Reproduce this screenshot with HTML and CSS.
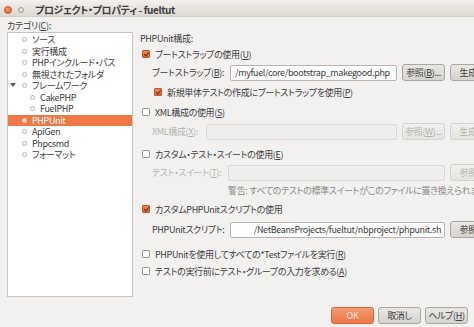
FILE: index.html
```html
<!DOCTYPE html>
<html>
<head>
    <title>プロジェクト・プロパティ - fueltut</title>
    <link rel="stylesheet" href="styles.css">
</head>
<body>
    <div class="titlebar">
        <span class="win-btn close"></span>
        <span class="win-btn minimize"></span>
        <span class="title">プロジェクト・プロパティ - fueltut</span>
    </div>

    <div class="dialog">
        <div class="categories">
            <div class="cat-label">カテゴリ(<u>C</u>):</div>
            <ul class="tree">
                <li><span class="twisty"></span><span class="bullet"></span>ソース</li>
                <li><span class="twisty"></span><span class="bullet"></span>実行構成</li>
                <li><span class="twisty"></span><span class="bullet"></span>PHPインクルード・パス</li>
                <li><span class="twisty"></span><span class="bullet"></span>無視されたフォルダ</li>
                <li><span class="twisty open"></span><span class="bullet"></span>フレームワーク</li>
                <li class="child"><span class="twisty"></span><span class="bullet"></span>CakePHP</li>
                <li class="child"><span class="twisty"></span><span class="bullet"></span>FuelPHP</li>
                <li class="selected"><span class="twisty"></span><span class="bullet"></span>PHPUnit</li>
                <li><span class="twisty"></span><span class="bullet"></span>ApiGen</li>
                <li><span class="twisty"></span><span class="bullet"></span>Phpcsmd</li>
                <li><span class="twisty"></span><span class="bullet"></span>フォーマット</li>
            </ul>
        </div>

        <div class="settings">
            <div class="heading">PHPUnit構成:</div>

            <div class="check gap-3"><span class="box checked"></span>ブートストラップの使用(<u>U</u>)</div>
            <div class="field gap-4">
                <span class="field-label w78">ブートストラップ(<u>B</u>):</span>
                <span class="entry">/myfuel/core/bootstrap_makegood.php</span>
                <button class="btn">参照(<u>B</u>)...</button>
                <button class="btn">生成...</button>
            </div>
            <div class="check nested gap-5"><span class="box checked"></span>新規単体テストの作成にブートストラップを使用(<u>P</u>)</div>

            <div class="check gap-8"><span class="box"></span>XML構成の使用(<u>S</u>)</div>
            <div class="field disabled gap-5">
                <span class="field-label w54">XML構成(<u>X</u>):</span>
                <span class="entry"></span>
                <button class="btn">参照(<u>W</u>)...</button>
                <button class="btn">生成...</button>
            </div>

            <div class="check gap-8"><span class="box"></span>カスタム・テスト・スイートの使用(<u>E</u>)</div>
            <div class="field disabled gap-4">
                <span class="field-label w76">テスト・スイート(<u>T</u>):</span>
                <span class="entry"></span>
                <button class="btn">参照...</button>
            </div>
            <div class="warning gap-4">警告: すべてのテストの標準スイートがこのファイルに置き換えられます。</div>

            <div class="check gap-6"><span class="box checked"></span>カスタムPHPUnitスクリプトの使用</div>
            <div class="field gap-6">
                <span class="field-label w78">PHPUnitスクリプト:</span>
                <span class="entry scrolled">/NetBeansProjects/fueltut/nbproject/phpunit.sh</span>
                <button class="btn">参照...</button>
            </div>

            <div class="check gap-10"><span class="box"></span>PHPUnitを使用してすべての*Testファイルを実行(<u>R</u>)</div>
            <div class="check gap-5"><span class="box"></span>テストの実行前にテスト・グループの入力を求める(<u>A</u>)</div>
        </div>
    </div>

    <div class="footer">
        <button class="btn btn-ok">OK</button>
        <button class="btn">取消し</button>
        <button class="btn">ヘルプ(<u>H</u>)</button>
    </div>
</body>
</html>
```

FILE: styles.css
```css
* {
    margin: 0;
    padding: 0;
    box-sizing: border-box;
}

body {
    width: 474px;
    height: 327px;
    overflow: hidden;
    background-color: #f2f1f0;
    color: #3c3c3c;
    font-family: 'Noto Sans CJK JP', 'Noto Sans', sans-serif;
    font-size: 9px;
    letter-spacing: -0.35px;
    font-feature-settings: "palt";
}

u {
    text-decoration: underline;
    text-underline-offset: 1px;
}

/* window title */
.titlebar {
    height: 17px;
    display: flex;
    align-items: center;
    padding-left: 4px;
    background: linear-gradient(#f3f1ee, #dcd8d2);
    border-bottom: 1px solid #d3cfc9;
}

.win-btn {
    border-radius: 50%;
    margin-top: 3px;
}

.close {
    width: 8px;
    height: 8px;
    background: radial-gradient(circle at 40% 35%, #f79a6c, #e0592a);
    border: 1px solid #c45427;
}

.minimize {
    width: 6px;
    height: 6px;
    margin-left: 6px;
    background: #e4e1dc;
    border: 1px solid #a19d97;
}

.title {
    margin-left: 11px;
    margin-top: 2px;
    font-size: 10px;
    letter-spacing: -0.4px;
    font-weight: bold;
    color: #3c3c3c;
}

/* main area */
.dialog {
    display: flex;
    gap: 7px;
    height: 280px;
    padding: 3px 0 0 7px;
    overflow: hidden;
}

.categories {
    width: 126px;
    flex-shrink: 0;
    display: flex;
    flex-direction: column;
}

.cat-label {
    height: 12px;
    line-height: 12px;
}

.tree {
    list-style: none;
    flex: 1;
    background-color: #ffffff;
    border: 1px solid #c8c5c0;
    padding-top: 1px;
}

.tree li {
    height: 11.5px;
    display: flex;
    align-items: center;
    white-space: nowrap;
}

.tree li.child {
    padding-left: 8px;
}

.tree li.selected {
    background-color: #f07746;
    color: #ffffff;
}

.twisty {
    width: 14px;
    height: 5px;
    flex-shrink: 0;
    position: relative;
}

.twisty.open::before {
    content: '';
    position: absolute;
    left: 2px;
    top: 0;
    border-left: 3px solid transparent;
    border-right: 3px solid transparent;
    border-top: 4px solid #5a5a5a;
}

.bullet {
    width: 5px;
    height: 5px;
    flex-shrink: 0;
    margin-right: 5px;
    border-radius: 50%;
    border: 1px solid #b4b1ac;
    background-color: #ffffff;
}

.selected .bullet {
    border-color: #fbd6c6;
    background-color: #fbd6c6;
}

/* settings panel */
.settings {
    width: 353px;
    flex-shrink: 0;
    padding-top: 13px;
}

.heading {
    height: 12px;
    line-height: 12px;
}

.check {
    height: 12px;
    display: flex;
    align-items: center;
    padding-left: 2px;
    white-space: nowrap;
}

.check.nested {
    padding-left: 14px;
}

.box {
    width: 8px;
    height: 8px;
    flex-shrink: 0;
    margin-right: 5px;
    border: 1px solid #9e9b96;
    border-radius: 1px;
    background-color: #ffffff;
    position: relative;
}

.box.checked {
    background: linear-gradient(#f0885a, #dc6432);
    border-color: #c0582c;
}

.box.checked::after {
    content: '';
    position: absolute;
    left: 2px;
    top: 0px;
    width: 2px;
    height: 4px;
    border-right: 1.5px solid #6e2b12;
    border-bottom: 1.5px solid #6e2b12;
    transform: rotate(40deg);
}

.field {
    height: 17px;
    display: flex;
    align-items: center;
    gap: 5px;
    padding-left: 12px;
    white-space: nowrap;
}

.field-label {
    flex-shrink: 0;
    margin-right: -5px;
}

.w54 { width: 54px; }
.w76 { width: 76px; }
.w78 { width: 78px; }

.entry {
    flex: 1;
    height: 16px;
    line-height: 14px;
    padding: 0 4px;
    background-color: #ffffff;
    border: 1px solid #b8b5b0;
    border-radius: 2px;
    overflow: hidden;
    white-space: nowrap;
}

.entry.scrolled {
    text-align: right;
    padding-right: 3px;
}

.btn {
    width: 43px;
    height: 17px;
    flex-shrink: 0;
    padding: 0;
    font-family: inherit;
    font-size: 9px;
    letter-spacing: inherit;
    font-feature-settings: "palt";
    color: #3c3c3c;
    background: linear-gradient(#e9e7e4, #d6d3ce);
    border: 1px solid #aaa6a0;
    border-radius: 3px;
    white-space: nowrap;
    overflow: hidden;
}

.disabled .field-label,
.disabled .btn {
    color: #b6b3ae;
}

.disabled .entry {
    background-color: #efeeec;
    border-color: #dcd9d5;
}

.disabled .btn {
    background: linear-gradient(#f1f0ee, #e6e4e1);
    border-color: #d6d3cf;
}

.warning {
    height: 12px;
    line-height: 12px;
    padding-left: 88px;
    color: #8a8783;
    white-space: nowrap;
}

.gap-3 { margin-top: 3px; }
.gap-4 { margin-top: 4px; }
.gap-5 { margin-top: 5px; }
.gap-6 { margin-top: 6px; }
.gap-8 { margin-top: 8px; }
.gap-10 { margin-top: 10px; }

/* dialog buttons */
.footer {
    display: flex;
    justify-content: flex-end;
    gap: 4px;
    padding: 10px 6px 0 0;
}

.footer .btn {
    width: 43px;
}

.btn-ok {
    background: linear-gradient(#f59a72, #ec7548);
    border-color: #d9663c;
    color: #fde3d8;
}
```
